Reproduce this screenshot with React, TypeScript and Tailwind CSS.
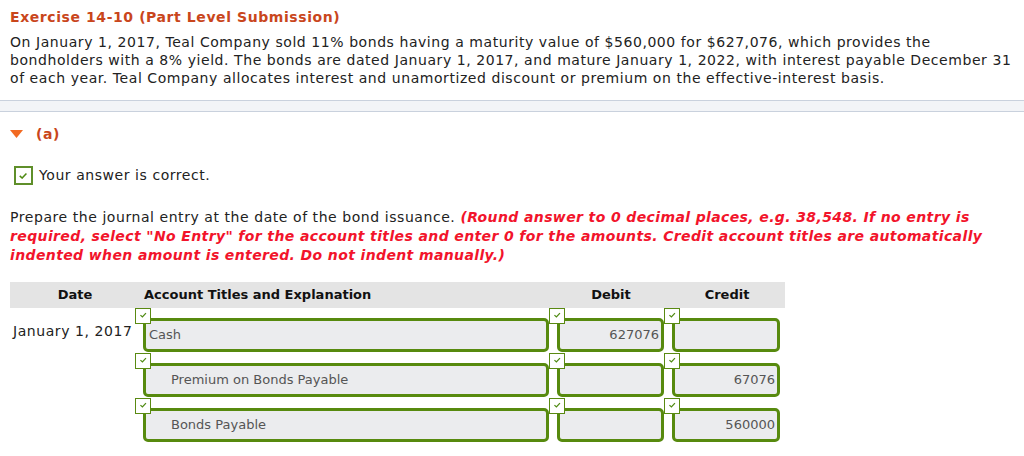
import React from 'react';

const FONT = { fontFamily: '"DejaVu Sans", Verdana, sans-serif' };

function Check({ size = 16 }: { size?: number }) {
  return (
    <svg width={size * 0.6} height={size * 0.45} viewBox="0 0 10 8">
      <path d="M1.5 4 L4 6.3 L8.5 1.5" fill="none" stroke="#4f8a12" strokeWidth="1.6" />
    </svg>
  );
}

function SmallBox() {
  return (
    <div className="absolute -left-[8px] -top-[10px] z-10 flex h-[16px] w-[16px] items-start justify-center border border-[#5a8a12] bg-white pt-[3px]">
      <Check size={14} />
    </div>
  );
}

function Field({
  width,
  text,
  align = 'left',
  indent = false,
}: {
  width: string;
  text?: string;
  align?: 'left' | 'right';
  indent?: boolean;
}) {
  return (
    <div className={`relative ${width}`}>
      <SmallBox />
      <div
        className={`flex h-[34px] items-center rounded-[5px] border-[3px] border-[#578a0e] bg-[#ebecee] text-[13px] tracking-normal text-[#555] ${
          align === 'right' ? 'justify-end pr-[2px]' : indent ? 'pl-[25px]' : 'pl-[3px]'
        }`}
      >
        {text}
      </div>
    </div>
  );
}

const rows = [
  { date: 'January 1, 2017', account: 'Cash', indent: false, debit: '627076', credit: '' },
  { date: '', account: 'Premium on Bonds Payable', indent: true, debit: '', credit: '67076' },
  { date: '', account: 'Bonds Payable', indent: true, debit: '', credit: '560000' },
];

export default function App() {
  return (
    <div
      className="h-[456px] w-[1024px] overflow-hidden bg-white text-[14px] tracking-[0.56px] text-[#222]"
      style={FONT}
    >
      <div className="px-[10px] pt-[8px]">
        <div className="text-[14px] font-bold leading-[18px] tracking-[0.58px] text-[#c9461c]">
          Exercise 14-10 (Part Level Submission)
        </div>
        <p className="mt-[7px] leading-[18px]">
          On January 1, 2017, Teal Company sold 11% bonds having a maturity value of $560,000 for $627,076, which provides the
          <br />
          bondholders with a 8% yield. The bonds are dated January 1, 2017, and mature January 1, 2022, with interest payable December 31
          <br />
          of each year. Teal Company allocates interest and unamortized discount or premium on the effective-interest basis.
        </p>
      </div>

      <div className="mt-[13px] h-[12px] border-y border-[#c9d1dd] bg-[#f2f4f7]" />

      <div className="px-[10px]">
        <div className="mt-[13px] flex h-[18px] items-center gap-[13px]">
          <svg width="13" height="8" viewBox="0 0 13 8">
            <path d="M0 0 H13 L6.5 8 Z" fill="#f26a22" />
          </svg>
          <span className="font-bold text-[#c9461c]">(a)</span>
        </div>

        <div className="mt-[22px] flex items-center gap-[6px] pl-[4px]">
          <div className="flex h-[19px] w-[19px] items-center justify-center border-2 border-[#5f8f2a] bg-white">
            <Check size={17} />
          </div>
          <span>Your answer is correct.</span>
        </div>

        <p className="mt-[22px] leading-[19px]">
          Prepare the journal entry at the date of the bond issuance.{' '}
          <span className="font-bold italic tracking-[0.38px] text-[#f2142b]">
            (Round answer to 0 decimal places, e.g. 38,548. If no entry is
            <br />
            required, select "No Entry" for the account titles and enter 0 for the amounts. Credit account titles are automatically
            <br />
            indented when amount is entered. Do not indent manually.)
          </span>
        </p>

        <div className="mt-[17px] w-[775px]">
          <div className="flex h-[26px] items-center bg-[#e4e4e4] text-[13px] font-bold tracking-normal text-[#111]">
            <div className="w-[130px] text-center">Date</div>
            <div className="w-[417px] pl-[4px]">Account Titles and Explanation</div>
            <div className="w-[108px] text-center">Debit</div>
            <div className="w-[120px] pl-[4px] text-center">Credit</div>
          </div>

          <div className="mt-[10px] flex flex-col gap-[11px]">
            {rows.map((r, i) => (
              <div key={i} className="flex items-start">
                <div className="w-[133px] pl-[3px] pt-[3px] leading-[20px]">{r.date}</div>
                <div className="flex gap-[8px]">
                  <Field width="w-[406px]" text={r.account} indent={r.indent} />
                  <Field width="w-[107px]" text={r.debit} align="right" />
                  <Field width="w-[108px]" text={r.credit} align="right" />
                </div>
              </div>
            ))}
          </div>
        </div>
      </div>
    </div>
  );
}
